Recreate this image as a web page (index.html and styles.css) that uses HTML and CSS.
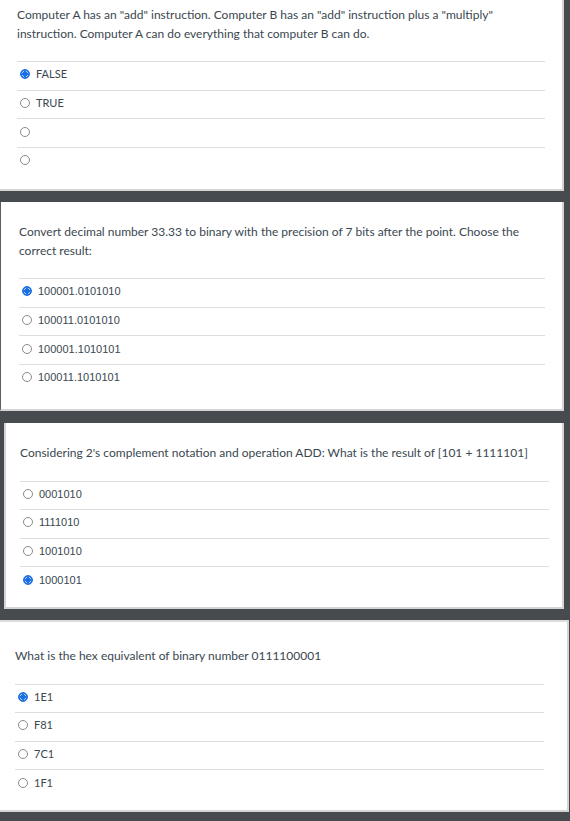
FILE: index.html
```html
<!DOCTYPE html>
<html>
<head>
<meta charset="utf-8">
<link rel="stylesheet" href="styles.css">
</head>
<body>
<div class="page">
  <section class="card card-1">
    <p class="question">Computer A has an "add" instruction. Computer B has an "add" instruction plus a "multiply" instruction. Computer A can do everything that computer B can do.</p>
    <ul class="answers">
      <li class="answer"><span class="radio checked"></span><span class="label lato">FALSE</span></li>
      <li class="answer"><span class="radio"></span><span class="label lato">TRUE</span></li>
      <li class="answer"><span class="radio"></span><span class="label lato"></span></li>
      <li class="answer"><span class="radio"></span><span class="label lato"></span></li>
    </ul>
  </section>
  <section class="card card-2">
    <p class="question">Convert decimal number 33.33 to binary with the precision of 7 bits after the point. Choose the correct result:</p>
    <ul class="answers">
      <li class="answer"><span class="radio checked"></span><span class="label arial">100001.0101010</span></li>
      <li class="answer"><span class="radio"></span><span class="label arial">100011.0101010</span></li>
      <li class="answer"><span class="radio"></span><span class="label arial">100001.1010101</span></li>
      <li class="answer"><span class="radio"></span><span class="label arial">100011.1010101</span></li>
    </ul>
  </section>
  <section class="card card-3">
    <p class="question">Considering 2's complement notation and operation ADD: What is the result of [101 + 1111101]</p>
    <ul class="answers">
      <li class="answer"><span class="radio"></span><span class="label arial">0001010</span></li>
      <li class="answer"><span class="radio"></span><span class="label arial">1111010</span></li>
      <li class="answer"><span class="radio"></span><span class="label arial">1001010</span></li>
      <li class="answer"><span class="radio checked"></span><span class="label arial">1000101</span></li>
    </ul>
  </section>
  <section class="card card-4">
    <p class="question">What is the hex equivalent of binary number 0111100001</p>
    <ul class="answers">
      <li class="answer"><span class="radio checked"></span><span class="label lato">1E1</span></li>
      <li class="answer"><span class="radio"></span><span class="label lato">F81</span></li>
      <li class="answer"><span class="radio"></span><span class="label lato">7C1</span></li>
      <li class="answer"><span class="radio"></span><span class="label lato">1F1</span></li>
    </ul>
  </section>
</div>
</body>
</html>
```

FILE: styles.css
```css
html, body {
  margin: 0;
  padding: 0;
  background: #474b4f;
}

body {
  width: 570px;
  height: 821px;
  overflow: hidden;
  font-family: Lato, "Liberation Sans", sans-serif;
  color: #3a4750;
}

.page {
  display: flex;
  flex-direction: column;
}

.card {
  background: #ffffff;
  box-sizing: border-box;
  border-right: 2px solid #d4d4d4;
  border-bottom: 2px solid #d4d4d4;
}

.card-1 {
  width: 564px;
  height: 191px;
  padding: 6px 17px 0 17px;
}

.card-2 {
  width: 564px;
  height: 209px;
  margin-top: 11px;
  padding: 21px 17px 0 18px;
  border-left: 1px solid #5a5e62;
}

.card-3 {
  width: 560px;
  height: 186px;
  margin-top: 12px;
  margin-left: 4px;
  padding: 21px 13px 0 14px;
  border-left: 2px solid #d4d4d4;
}

.card-4 {
  width: 569px;
  height: 192px;
  margin-top: 11px;
  padding: 25px 23px 0 15px;
  border-top: 2px solid #dcdcdc;
}

.question {
  margin: 0;
  font-size: 12px;
  line-height: 18.5px;
}

.answers {
  list-style: none;
  margin: 18px 0 0 0;
  padding: 0;
}

.answer {
  display: flex;
  align-items: center;
  gap: 6px;
  height: 28.67px;
  box-sizing: border-box;
  padding-left: 3px;
  padding-bottom: 3px;
  border-top: 1px solid #dedede;
}

.radio {
  flex: none;
  width: 10px;
  height: 10px;
  box-sizing: border-box;
  border-radius: 50%;
  border: 1px solid #8a8a8a;
  background: #ffffff;
}

.radio.checked {
  border-color: #1b6fe3;
  background: radial-gradient(circle, #1b6fe3 0 2.6px, #dbe8fb 3px 3.1px, #1b6fe3 3.6px);
}

.label {
  font-size: 11px;
  line-height: 14px;
  color: #3a4750;
}

.label.lato {
  font-family: Lato, "Liberation Sans", sans-serif;
}

.label.arial {
  font-family: "Liberation Sans", Arial, sans-serif;
}
```
